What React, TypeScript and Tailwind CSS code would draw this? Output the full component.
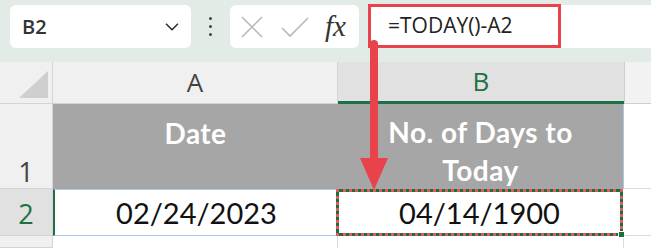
import { ChevronDown } from "lucide-react";

const ui = { fontFamily: '"Open Sans", "Noto Sans", sans-serif' };
const cell = { fontFamily: 'Lato, "Liberation Sans", sans-serif' };

function FormulaBar() {
  return (
    <div className="flex h-[62px] items-start bg-[#e2ebe5] pl-[10px] pt-[5px]" style={ui}>
      {/* name box */}
      <div className="flex h-[43px] w-[181px] items-center justify-between rounded-[6px] bg-white pl-[12px] pr-[8px]">
        <span className="text-[20px] font-semibold text-[#333]">B2</span>
        <ChevronDown className="h-[22px] w-[22px] text-[#333]" strokeWidth={1.8} />
      </div>
      <div className="flex h-[43px] w-[39px] flex-col items-center justify-center gap-[5px]">
        <span className="h-[3px] w-[3px] rounded-full bg-[#444]" />
        <span className="h-[3px] w-[3px] rounded-full bg-[#444]" />
        <span className="h-[3px] w-[3px] rounded-full bg-[#444]" />
      </div>
      {/* cancel / enter / fx */}
      <div className="flex h-[43px] w-[129px] items-center rounded-[6px] bg-white pl-[10px]">
        <svg width="24" height="22" viewBox="0 0 24 22" className="text-[#b8b8b8]">
          <path d="M2 1 L22 21 M22 1 L2 21" stroke="currentColor" strokeWidth="1.6" fill="none" />
        </svg>
        <svg width="30" height="22" viewBox="0 0 30 22" className="ml-[16px] text-[#b8b8b8]">
          <path d="M2 12 L10 20 L28 2" stroke="currentColor" strokeWidth="1.6" fill="none" />
        </svg>
        <span
          className="ml-[15px] text-[29px] italic leading-none text-[#333]"
          style={{ fontFamily: '"Liberation Serif", "DejaVu Serif", serif' }}
        >
          fx
        </span>
      </div>
      {/* formula box */}
      <div className="ml-[9px] flex h-[43px] flex-1 bg-white">
        <div className="flex h-[44px] w-[193px] -translate-y-[1px] items-center border-[3px] border-[#e8424a] pl-[17px]">
          <span className="text-[21px] text-[#222]">=TODAY()-A2</span>
        </div>
      </div>
    </div>
  );
}

function ColumnHeaders() {
  return (
    <div className="flex h-[42px] bg-[#f0f0f0]" style={ui}>
      <div className="relative w-[53px] border-r border-b border-[#d4d4d4]">
        <svg width="30" height="28" viewBox="0 0 30 28" className="absolute left-[19px] top-[9px]">
          <path d="M29 0 L29 27 L0 27 Z" fill="#cfcfcf" />
        </svg>
      </div>
      <div className="flex w-[285px] items-center justify-center border-r border-b border-[#d4d4d4] text-[26px] text-[#444]">
        A
      </div>
      <div className="flex w-[286px] items-center justify-center border-b-[3px] border-[#1d7144] bg-[#e1e1e1] text-[26px] text-[#1d7144]">
        B
      </div>
      <div className="flex-1 border-l border-b border-[#cfcfcf] bg-[#f2f2f2]" />
    </div>
  );
}

function RowHeader({ n, h, lh, selected = false }: { n?: string; h: string; lh: string; selected?: boolean }) {
  return (
    <div
      className={`flex w-[53px] items-end justify-center border-r border-b border-[#d4d4d4] text-[27px] ${lh} ${h} ${
        selected ? "bg-[#e1e1e1] text-[#1d7144]" : "bg-[#f0f0f0] text-[#444]"
      }`}
      style={ui}
    >
      {n}
    </div>
  );
}

function Grid() {
  return (
    <div className="flex flex-col">
      {/* row 1 */}
      <div className="flex h-[85px]">
        <RowHeader n="1" h="h-[85px]" lh="leading-[32px]" />
        <div
          className="flex w-[285px] justify-center bg-[#a6a6a6] pt-[9px] text-[28px] font-bold leading-[40px] tracking-[0.4px] text-white"
          style={cell}
        >
          Date
        </div>
        <div
          className="flex w-[286px] flex-col items-center border-r border-[#a9c8ea] bg-[#a6a6a6] pt-[9px] text-[28px] font-bold leading-[38px] tracking-[0.5px] text-white"
          style={cell}
        >
          <span>No. of Days to</span>
          <span>Today</span>
        </div>
        <div className="flex-1 border-b border-[#dadada] bg-white" />
      </div>
      {/* row 2 */}
      <div className="flex h-[47px]">
        <RowHeader n="2" h="h-[47px]" lh="leading-[42px]" selected />
        <div
          className="flex w-[285px] items-center justify-center border-l-[2px] border-y border-l-[#1d7144] border-y-[#a9c8ea] bg-white text-[29px] text-[#111]"
          style={cell}
        >
          02/24/2023
        </div>
        <div
          className="relative flex w-[287px] -ml-[2px] items-center justify-center border-[3px] border-[#1d6b3f] bg-white text-[29px] text-[#111]"
          style={cell}
        >
          <div className="absolute -inset-[3px] border-[3px] border-dotted border-[#e05a5a]" />
          04/14/1900
          <div className="absolute -bottom-[5px] -right-[5px] h-[7px] w-[7px] border border-white bg-[#1d6b3f]" />
        </div>
        <div className="flex-1 border-b border-[#dadada] bg-white" />
      </div>
      {/* row 3 */}
      <div className="flex h-[12px]">
        <RowHeader h="h-[12px]" lh="leading-none" />
        <div className="w-[285px] border-r border-[#dadada] bg-white" />
        <div className="w-[286px] border-r border-[#dadada] bg-white" />
        <div className="flex-1 bg-white" />
      </div>
    </div>
  );
}

export default function App() {
  return (
    <div className="relative h-[248px] w-[651px] overflow-hidden bg-white">
      <FormulaBar />
      <ColumnHeaders />
      <Grid />
      {/* red arrow from formula to B2 */}
      <svg className="pointer-events-none absolute left-[359px] top-[40px]" width="30" height="150" viewBox="0 0 30 150">
        <path d="M15 150 L1 118 L11 118 L11 4 Q11 0 15 0 Q19 0 19 4 L19 118 L29 118 Z" fill="#e8424a" />
      </svg>
    </div>
  );
}
